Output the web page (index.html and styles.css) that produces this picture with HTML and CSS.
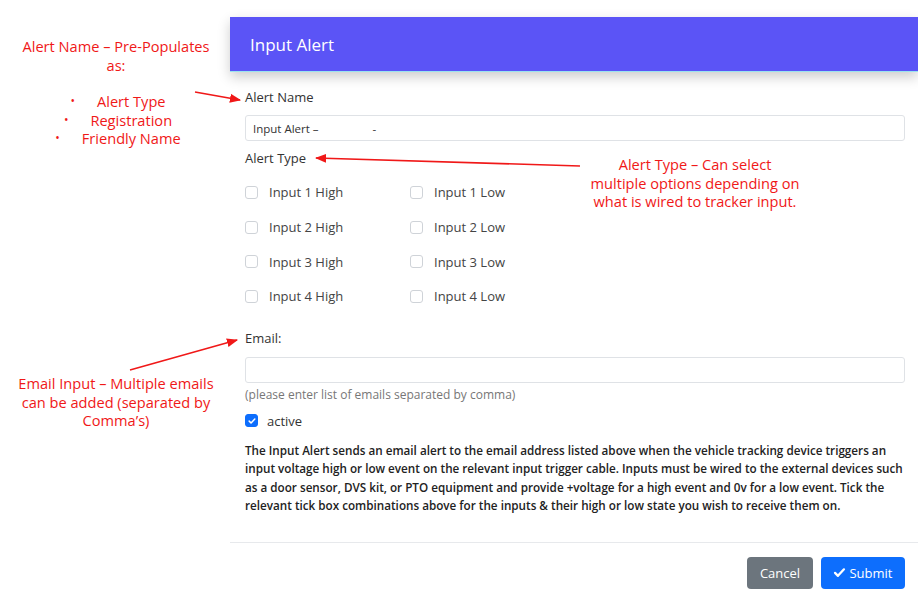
FILE: index.html
```html
<!DOCTYPE html>
<html>
<head>
<meta charset="utf-8">
<link rel="stylesheet" href="styles.css">
</head>
<body>
<div class="page">
  <div class="gutter"></div>
  <div class="modal">
    <div class="modal-header">Input Alert</div>
    <div class="modal-body">
      <div class="label first">Alert Name</div>
      <div class="input"><span>Input Alert –</span><span class="dash">-</span></div>
      <div class="label">Alert Type</div>
      <div class="checks">
        <div class="check"><span class="box"></span>Input 1 High</div>
        <div class="check"><span class="box"></span>Input 1 Low</div>
        <div class="check"><span class="box"></span>Input 2 High</div>
        <div class="check"><span class="box"></span>Input 2 Low</div>
        <div class="check"><span class="box"></span>Input 3 High</div>
        <div class="check"><span class="box"></span>Input 3 Low</div>
        <div class="check"><span class="box"></span>Input 4 High</div>
        <div class="check"><span class="box"></span>Input 4 Low</div>
      </div>
      <div class="label email">Email:</div>
      <div class="input tall"></div>
      <div class="help">(please enter list of emails separated by comma)</div>
      <div class="check active"><span class="box on"><svg viewBox="0 0 16 16" width="10" height="10"><path d="M3.5 8.2l3 3 6-6.4" fill="none" stroke="#fff" stroke-width="2.4" stroke-linecap="round" stroke-linejoin="round"/></svg></span>active</div>
      <p class="desc">The Input Alert sends an email alert to the email address listed above when the vehicle tracking device triggers an input voltage high or low event on the relevant input trigger cable. Inputs must be wired to the external devices such as a door sensor, DVS kit, or PTO equipment and provide +voltage for a high event and 0v for a low event. Tick the relevant tick box combinations above for the inputs &amp; their high or low state you wish to receive them on.</p>
    </div>
    <div class="modal-footer">
      <button class="btn cancel">Cancel</button>
      <button class="btn submit"><svg viewBox="0 0 16 16" width="13" height="13"><path d="M2.5 8.5l3.6 3.6 7.4-8" fill="none" stroke="#fff" stroke-width="2.8" stroke-linecap="round" stroke-linejoin="round"/></svg>Submit</button>
    </div>
  </div>
</div>

<div class="note note-name">
  <div>Alert Name – Pre-Populates<br>as:</div>
  <ul class="bullets">
    <li><span class="dot">•</span>Alert Type</li>
    <li><span class="dot">•</span>Registration</li>
    <li><span class="dot">•</span>Friendly Name</li>
  </ul>
</div>
<div class="note note-type">Alert Type – Can select<br>multiple options depending on<br>what is wired to tracker input.</div>
<div class="note note-email">Email Input – Multiple emails<br>can be added (separated by<br>Comma’s)</div>

<svg class="arrows" width="918" height="596" viewBox="0 0 918 596">
  <defs>
    <marker id="ah" viewBox="0 0 10 10" refX="9" refY="5" markerWidth="7" markerHeight="7" orient="auto">
      <path d="M0 1L10 5L0 9z" fill="#f01818"/>
    </marker>
  </defs>
  <line x1="195" y1="92" x2="240" y2="100" stroke="#f01818" stroke-width="1.6" marker-end="url(#ah)"/>
  <line x1="580" y1="166" x2="316" y2="158" stroke="#f01818" stroke-width="1.6" marker-end="url(#ah)"/>
  <line x1="130" y1="370" x2="237" y2="340" stroke="#f01818" stroke-width="1.6" marker-end="url(#ah)"/>
</svg>
</body>
</html>
```
FILE: styles.css
```css
html, body {
  margin: 0;
  padding: 0;
  background: #fff;
}
body {
  width: 918px;
  height: 596px;
  overflow: hidden;
  position: relative;
  font-family: "Open Sans", "Liberation Sans", sans-serif;
  color: #333;
}
.page {
  display: flex;
  padding-top: 17px;
}
.gutter {
  width: 230px;
  flex: none;
}
.modal {
  flex: 1;
  display: flex;
  flex-direction: column;
}
.modal-header {
  height: 55px;
  box-sizing: border-box;
  background: #5b54f6;
  color: #fff;
  font-size: 17px;
  padding-left: 20px;
  display: flex;
  align-items: center;
  border-bottom: 1px solid #9be3f0;
  box-shadow: 0 5px 12px rgba(0,0,0,0.2);
  position: relative;
  z-index: 1;
}
.modal-body {
  padding: 0 13px 0 15px;
  display: flex;
  flex-direction: column;
}
.label {
  font-size: 13px;
  line-height: 19px;
  color: #333;
  margin-top: 8px;
}
.label.first {
  margin-top: 16px;
}
.input {
  height: 26px;
  box-sizing: border-box;
  border: 1px solid #dfe2e6;
  border-radius: 3px;
  margin-top: 8px;
  font-size: 11.5px;
  color: #333;
  display: flex;
  align-items: center;
  padding-left: 7px;
}
.input .dash {
  margin-left: 54px;
}
.input.tall {
  height: 26px;
  margin-top: 9px;
}
.checks {
  display: grid;
  grid-template-columns: 165px 165px;
  grid-auto-rows: 34.7px;
  margin-top: 7px;
}
.check {
  display: flex;
  align-items: center;
  font-size: 13px;
  color: #444;
}
.box {
  width: 13px;
  height: 13px;
  box-sizing: border-box;
  border: 1px solid #cfd3d8;
  border-radius: 3px;
  margin-right: 11px;
  flex: none;
  display: flex;
  align-items: center;
  justify-content: center;
}
.box.on {
  background: #0d6efd;
  border-color: #0d6efd;
}
.label.email {
  margin-top: 15px;
}
.help {
  font-size: 12px;
  color: #777;
  margin-top: 4px;
  line-height: 15px;
}
.check.active {
  margin-top: 10px;
  height: 18px;
  font-size: 13px;
  color: #333;
}
.check.active .box {
  margin-right: 9px;
}
.desc {
  margin: 11px 0 0;
  font-size: 11.7px;
  line-height: 18.5px;
  font-weight: 600;
  color: #222;
}
.modal-footer {
  margin-top: 27px;
  border-top: 1px solid #e7e9ec;
  padding: 14px 13px 0 0;
  display: flex;
  justify-content: flex-end;
  gap: 8px;
}
.btn {
  height: 32px;
  border: none;
  border-radius: 4px;
  color: #fff;
  font-family: "Open Sans", "Liberation Sans", sans-serif;
  font-size: 13px;
  padding: 0 10px;
  display: flex;
  align-items: center;
  gap: 3px;
}
.cancel {
  background: #6c757d;
  width: 66px;
  justify-content: center;
}
.submit {
  background: #0d6efd;
  width: 84px;
  justify-content: center;
}
.note {
  position: absolute;
  color: #f01818;
  font-size: 14.6px;
  line-height: 18.5px;
  text-align: center;
  font-family: "Open Sans", "Liberation Sans", sans-serif;
}
.note-name {
  left: 0;
  top: 37px;
  width: 232px;
}
.bullets {
  list-style: none;
  margin: 18px 0 0;
  padding: 0;
}
.bullets li {
  display: flex;
  justify-content: center;
  gap: 22px;
  padding-left: 4px;
}
.bullets .dot {
  font-size: 12px;
}
.note-type {
  left: 575px;
  top: 155px;
  width: 240px;
}
.note-email {
  left: 0;
  top: 374px;
  width: 232px;
}
.arrows {
  position: absolute;
  left: 0;
  top: 0;
  pointer-events: none;
}
```
